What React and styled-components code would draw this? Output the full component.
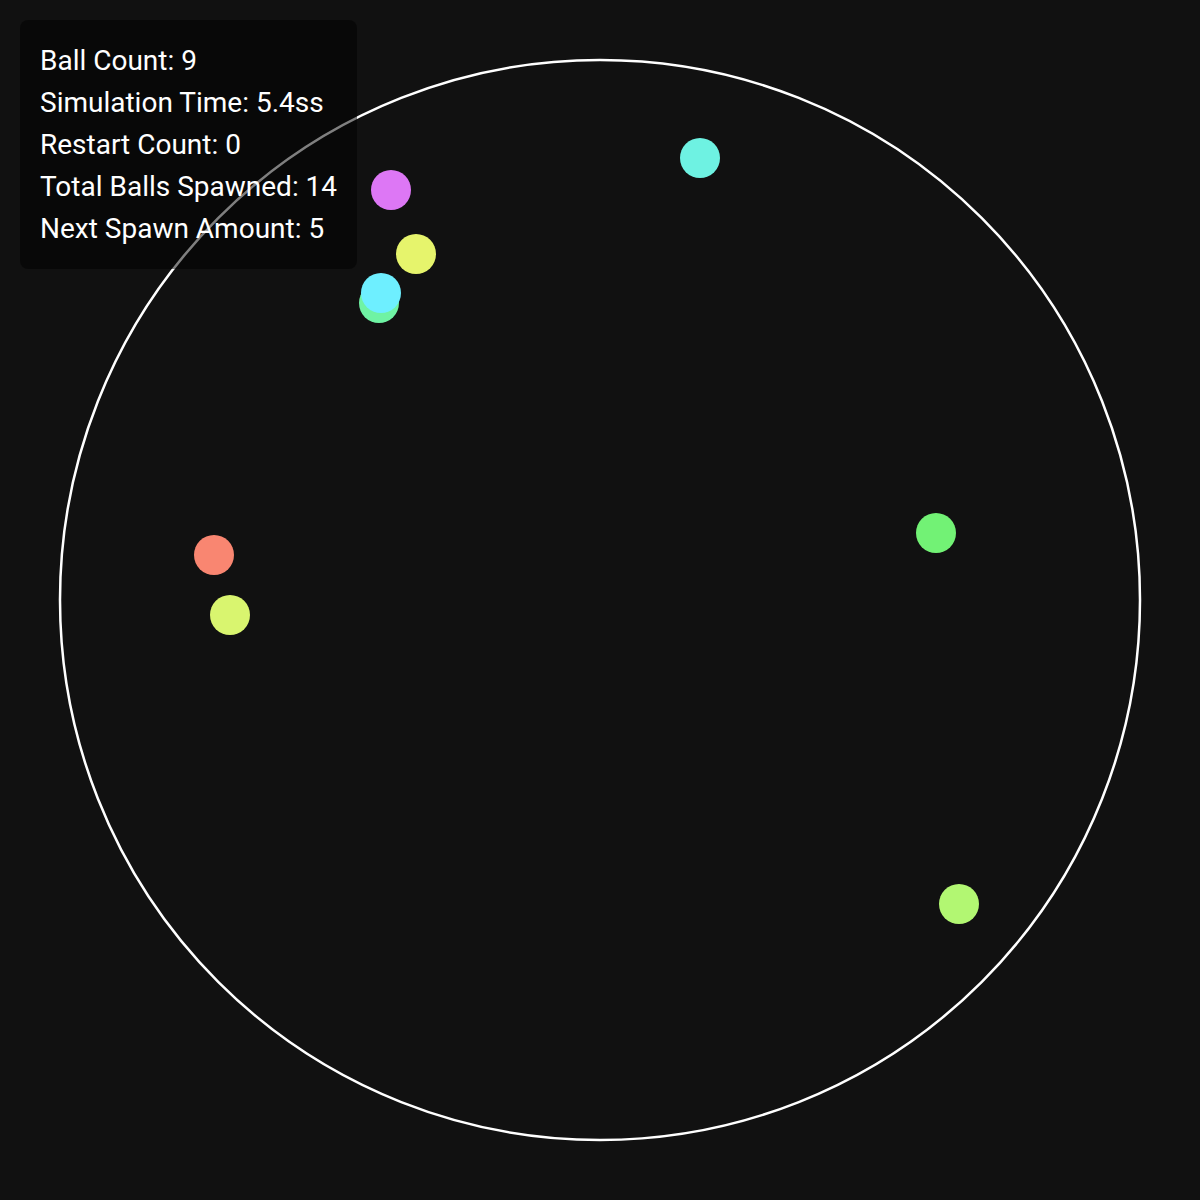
import React from "react";
import styled, { createGlobalStyle } from "styled-components";

const Global = createGlobalStyle`
  html, body { margin: 0; padding: 0; background: #111111; }
  body { width: 1200px; height: 1200px; overflow: hidden; font-family: Roboto, "Liberation Sans", sans-serif; }
`;

const Stage = styled.div`
  position: relative;
  width: 1200px;
  height: 1200px;
  background: #111111;
`;

const Canvas = styled.svg`
  display: block;
  width: 1200px;
  height: 1200px;
`;

const Stats = styled.div`
  position: absolute;
  top: 20px;
  left: 20px;
  width: 297px;
  padding: 20px 20px 19px;
  background: rgba(0, 0, 0, 0.5);
  border-radius: 8px;
  color: #ffffff;
  font-family: Roboto, "Liberation Sans", sans-serif;
  font-size: 28px;
  line-height: 42px;
`;

const StatLine = styled.div`
  white-space: nowrap;
`;

const balls = [
  { x: 391, y: 190, c: "#dd77f5" },
  { x: 416, y: 254, c: "#e6f46c" },
  { x: 379, y: 303, c: "#6ff3a4" },
  { x: 381, y: 293, c: "#6eefff" },
  { x: 700, y: 158, c: "#6ef2e2" },
  { x: 214, y: 555, c: "#f98671" },
  { x: 230, y: 615, c: "#d9f56f" },
  { x: 936, y: 533, c: "#72f275" },
  { x: 959, y: 904, c: "#b2f772" },
];

const stats = [
  "Ball Count: 9",
  "Simulation Time: 5.4ss",
  "Restart Count: 0",
  "Total Balls Spawned: 14",
  "Next Spawn Amount: 5",
];

export default function App() {
  return (
    <>
      <Global />
      <Stage>
        <Canvas viewBox="0 0 1200 1200">
          <circle cx="600" cy="600" r="540" fill="none" stroke="#ffffff" strokeWidth="2.5" />
          {balls.map((b, i) => (
            <circle key={i} cx={b.x} cy={b.y} r="20" fill={b.c} />
          ))}
        </Canvas>
        <Stats>
          {stats.map((s) => (
            <StatLine key={s}>{s}</StatLine>
          ))}
        </Stats>
      </Stage>
    </>
  );
}
